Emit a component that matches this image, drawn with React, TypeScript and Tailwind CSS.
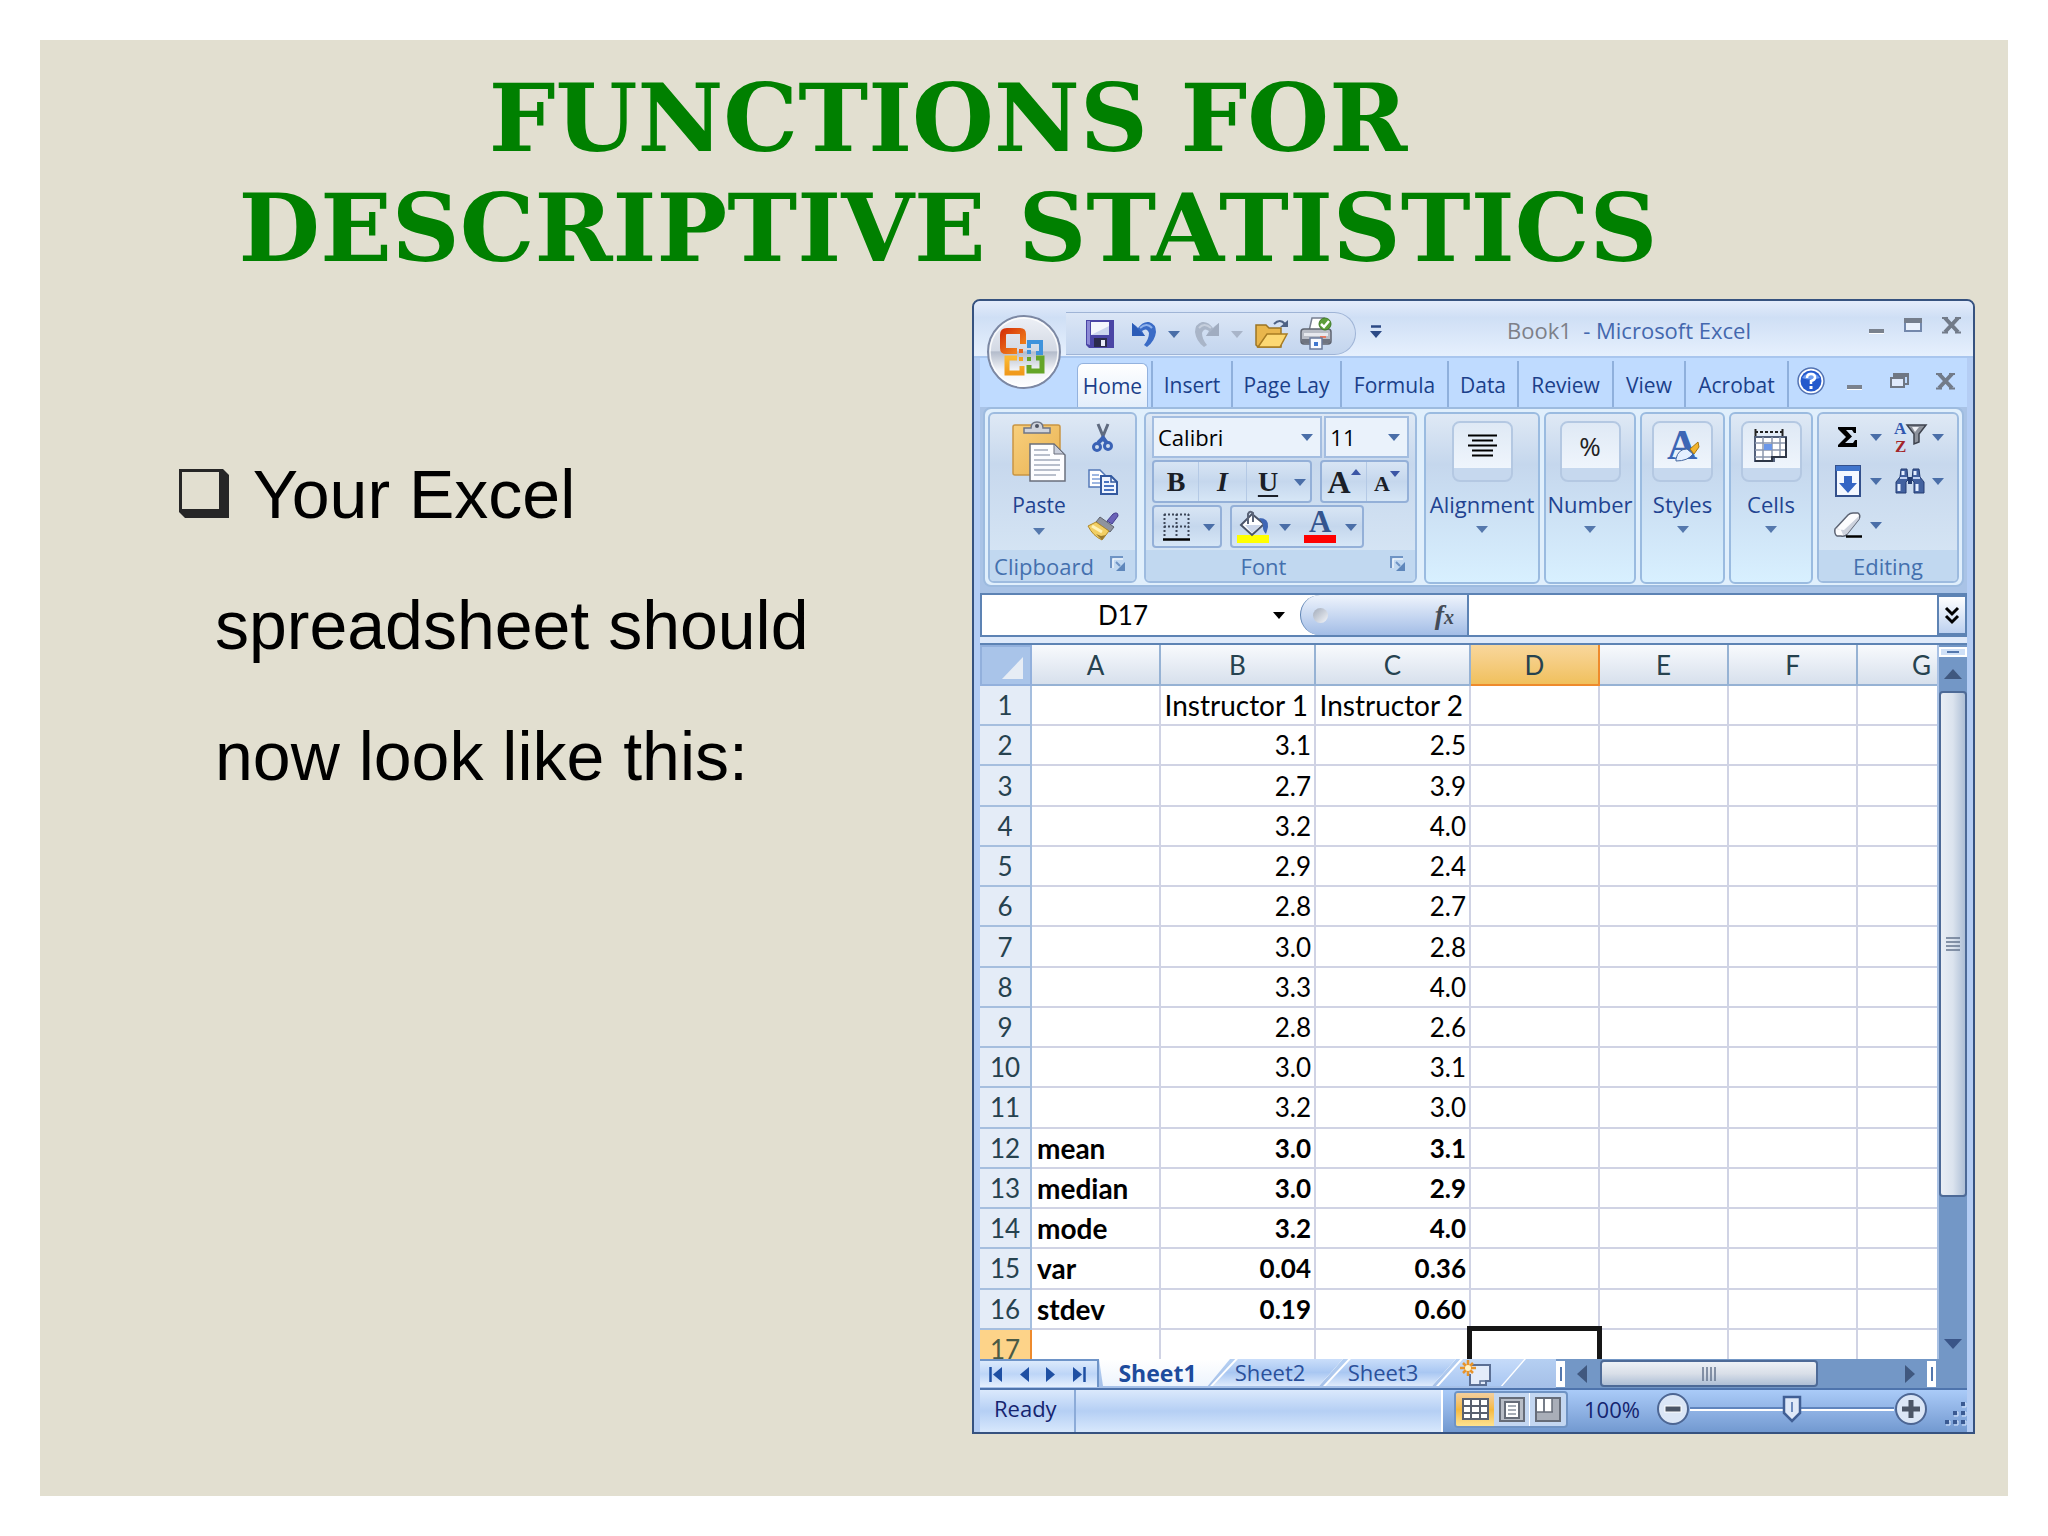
import React from "react";

const ui = "font-['Open_Sans','Noto_Sans',sans-serif]";
const cellFont = "font-['Lato','Liberation_Sans',sans-serif]";

type IconProps = { w: number; h: number; className?: string; children: React.ReactNode };
function Icon({ w, h, className = "", children }: IconProps) {
  return (
    <svg width={w} height={h} viewBox={`0 0 ${w} ${h}`} className={`block shrink-0 overflow-visible ${className}`} aria-hidden="true" fill="none">
      {children}
    </svg>
  );
}

function Caret({ className = "text-[#4a6ea8]" }: { className?: string }) {
  return (
    <Icon w={12} h={8} className={className}>
      <path d="M0 1H12L6 8Z" fill="currentColor" />
    </Icon>
  );
}

function BulletIcon() {
  return (
    <svg width="50" height="49" viewBox="0 0 50 49" className="mr-1.5 inline-block align-baseline" aria-hidden="true">
      <path d="M0 0H44L50 6V49H6L0 43Z" fill="#262626" />
      <path d="M3 3H40V40H3Z" fill="#e2dfd0" />
    </svg>
  );
}

function OfficeLogo() {
  return (
    <Icon w={76} h={76}>
      <defs>
        <linearGradient id="orb" x1="0" y1="0" x2="0" y2="1">
          <stop offset="0" stopColor="#eef1f7" />
          <stop offset="0.48" stopColor="#d3d9e4" />
          <stop offset="0.5" stopColor="#b4bccb" />
          <stop offset="0.75" stopColor="#f1f3f7" />
          <stop offset="1" stopColor="#ffffff" />
        </linearGradient>
        <linearGradient id="orbRed" x1="0" y1="0" x2="1" y2="1">
          <stop offset="0" stopColor="#d6350a" />
          <stop offset="1" stopColor="#f58a1d" />
        </linearGradient>
        <linearGradient id="orbYellow" x1="0" y1="0" x2="0" y2="1">
          <stop offset="0" stopColor="#fcb931" />
          <stop offset="1" stopColor="#f09a1c" />
        </linearGradient>
      </defs>
      <circle cx="38" cy="38" r="36" fill="url(#orb)" stroke="#7c88a3" strokeWidth="2" />
      <circle cx="38" cy="38" r="34" stroke="#fff" strokeWidth="1.5" opacity="0.8" />
      <path d="M37 30V20Q37 17 34 17H21Q17 17 17 21V34Q17 37 20 37H31" stroke="url(#orbRed)" strokeWidth="6" />
      <path d="M43 34V28H55V39H50" stroke="#3f93dc" strokeWidth="4" />
      <path d="M31 44H21V59H36V52" stroke="url(#orbYellow)" strokeWidth="5" />
      <path d="M50 44H56V57H43V51" stroke="#64a527" strokeWidth="5" />
      <rect x="33" y="35" width="4" height="4" fill="#e8641c" />
      <rect x="41" y="36" width="4" height="4" fill="#3f93dc" />
      <rect x="33" y="43" width="4" height="4" fill="#f2a41f" />
      <rect x="41" y="43" width="4" height="4" fill="#64a527" />
    </Icon>
  );
}

const SaveIcon = () => (
  <Icon w={28} h={28}>
    <path d="M0 0H28V28H3L0 25Z" fill="#4a45a5" />
    <path d="M1 1H4V25L1 24Z" fill="#8d8ad6" />
    <rect x="5" y="2" width="18" height="13" fill="#f4f6fd" />
    <path d="M5 15L23 6V15Z" fill="#ccd5ef" />
    <rect x="8" y="18" width="13" height="9" fill="#2b2b4c" />
    <rect x="15" y="20" width="4" height="6" fill="#e8ebf8" />
  </Icon>
);

const UndoIcon = ({ light = false }: { light?: boolean }) => (
  <Icon w={26} h={26} className={light ? "-scale-x-100" : ""}>
    <path d="M7 7Q12 0 18 1Q25 3 25 11Q24 20 16 26L13 24Q18 18 18 12Q16 6 11 10L14 15H1V2L5 5Z" fill={light ? "#a9b5c8" : "#3a6bc6"} />
    <path d="M1 2V15H14L11 12L5 6Z" fill={light ? "#a0acc0" : "#2b5cb8"} />
    <path d="M9 7Q16 1 21 7" stroke={light ? "#c6cfdd" : "#8fb2ec"} strokeWidth="2" />
  </Icon>
);

const OpenIcon = () => (
  <Icon w={34} h={30}>
    <path d="M1 6H11L14 9H26V28H3L1 26Z" fill="#e9b64c" stroke="#9b7425" strokeWidth="1.5" />
    <path d="M3 28L12 15H32L25 28Z" fill="#fcd873" stroke="#a87c22" strokeWidth="1.5" />
    <path d="M19 5Q25 -1 30 5" stroke="#4e6284" strokeWidth="2" />
    <path d="M25 8H33V1Z" fill="#4e6284" />
  </Icon>
);

const PrintIcon = () => (
  <Icon w={34} h={33}>
    <path d="M10 14L13 1H25L22 14Z" fill="#fff" stroke="#777f90" strokeWidth="1.5" />
    <rect x="2" y="12" width="30" height="15" rx="3" fill="#b9bdc6" stroke="#5f6470" strokeWidth="1.5" />
    <rect x="5" y="16" width="24" height="3" fill="#e7e9ee" />
    <rect x="21" y="19" width="6" height="2" fill="#e77a62" />
    <rect x="3" y="22" width="28" height="4" fill="#6f7480" />
    <rect x="11" y="21" width="12" height="11" fill="#f7faff" stroke="#69799a" strokeWidth="1.5" />
    <rect x="15" y="25" width="4" height="4" fill="#3f77cf" />
    <circle cx="26" cy="7" r="6" fill="#5d9e3a" stroke="#3f7a25" />
    <path d="M22 7L25 10L30 4" stroke="#fff" strokeWidth="2.5" />
  </Icon>
);

const PasteIcon = () => (
  <Icon w={54} h={62}>
    <defs>
      <linearGradient id="clip" x1="0" y1="0" x2="1" y2="1">
        <stop offset="0" stopColor="#f8cf7c" />
        <stop offset="1" stopColor="#e9b354" />
      </linearGradient>
    </defs>
    <rect x="1" y="4" width="47" height="50" rx="2" fill="url(#clip)" stroke="#c99543" strokeWidth="1.5" />
    <path d="M12 12V7H19Q19 1 25 1Q31 1 31 7H38V12Z" fill="#cfd3dc" stroke="#6f7686" strokeWidth="1.5" />
    <circle cx="25" cy="5" r="2" fill="#4e5462" />
    <path d="M18 23H42L53 34V60H18Z" fill="#fdfdff" stroke="#6a6f7c" strokeWidth="1.5" />
    <path d="M42 23V33H52Z" fill="#c9cedb" stroke="#6a6f7c" />
    <path d="M22 29H36M22 34H38M22 39H48M22 44H48M22 49H48M22 54H44" stroke="#b9bfcc" strokeWidth="2" />
  </Icon>
);

const CutIcon = () => (
  <Icon w={22} h={30}>
    <path d="M6 1L13 18M16 1L9 18" stroke="#5f6b80" strokeWidth="3" />
    <circle cx="5" cy="24" r="3.5" stroke="#3a62b5" strokeWidth="3" />
    <circle cx="16" cy="23" r="3.5" stroke="#3a62b5" strokeWidth="3" />
    <path d="M6 20L11 15L15 20" stroke="#3a62b5" strokeWidth="4" />
  </Icon>
);

const CopyIcon = () => (
  <Icon w={30} h={26}>
    <path d="M1 1H12L17 6V18H1Z" fill="#fff" stroke="#5378b8" strokeWidth="1.5" />
    <path d="M4 6H11M4 10H13M4 14H13" stroke="#7fa0d8" strokeWidth="1.5" />
    <path d="M13 7H23L29 13V25H13Z" fill="#eef4ff" stroke="#33599f" strokeWidth="2" />
    <path d="M23 7V13H29" stroke="#33599f" strokeWidth="1.5" />
    <path d="M16 13H21M16 17H26M16 21H26" stroke="#4a74c0" strokeWidth="2" />
  </Icon>
);

const BrushIcon = () => (
  <Icon w={32} h={29}>
    <path d="M20 9L26 2Q31 -1 31 4L25 12Z" fill="#6a62b8" stroke="#433c8c" />
    <path d="M13 5L27 15L23 20L9 10Z" fill="#8f939d" stroke="#5e626c" />
    <path d="M9 10L22 19L15 28Q6 24 1 14Z" fill="#f2cf64" stroke="#b08a2b" />
    <path d="M5 14L15 20" stroke="#fff3b8" strokeWidth="3" />
    <path d="M9 22L15 28L19 23L14 24Z" fill="#9a7a2c" />
  </Icon>
);

const LauncherIcon = () => (
  <Icon w={16} h={16}>
    <path d="M1 12V1H13" stroke="#6f94c4" strokeWidth="2" />
    <path d="M6 6L10 10" stroke="#6f94c4" strokeWidth="2" />
    <path d="M15 6V15H6Z" fill="#5f87bb" />
    <path d="M3 12V3H13" stroke="#fff" strokeWidth="1" />
  </Icon>
);

const BordersIcon = () => (
  <Icon w={27} h={28}>
    <path d="M1 1.5H26M1 13.5H26M1.5 1V24M13.5 1V24M25.5 1V24" stroke="#3c4658" strokeWidth="2" strokeDasharray="2 2" />
    <path d="M0 26.5H27" stroke="#000" strokeWidth="2.5" />
  </Icon>
);

const FillIcon = () => (
  <Icon w={34} h={34}>
    <rect x="1" y="25" width="32" height="8" fill="#ffff00" />
    <path d="M16 4L28 14L16 25L5 15Z" fill="#fff" stroke="#4a5468" strokeWidth="2" />
    <path d="M9 15H25L16 23Z" fill="#cbd6ea" />
    <path d="M12 14V4Q14 0 17 3V12" stroke="#5a6478" strokeWidth="2" />
    <path d="M23 8Q33 8 32 17Q31 21 30 24Q26 20 27 14Z" fill="#3f66b5" />
  </Icon>
);

const AlignIcon = () => (
  <Icon w={29} h={23}>
    <path d="M0 1.5H29M4 6.5H25M0 11.5H29M4 16.5H25M4 21.5H25" stroke="#000" strokeWidth="2" />
  </Icon>
);

const StylesIcon = () => (
  <Icon w={34} h={33}>
    <text x="1" y="30" fontFamily="Liberation Serif" fontWeight="700" fontSize="42" fill="#3c66b5">A</text>
    <path d="M10 30Q12 20 21 20L27 25Q22 32 10 32Z" fill="#e4efff" stroke="#44679f" />
    <path d="M24 20L32 13L33 18L28 25Z" fill="#f2b42d" stroke="#a77912" />
  </Icon>
);

const CellsIcon = () => (
  <Icon w={34} h={33}>
    <path d="M1 8H32V28H20V32H1Z" fill="#fff" stroke="#53617c" strokeWidth="2" />
    <path d="M1 14H32M1 21H32M1 28H20M9 8V32M18 8V28M26 8V28" stroke="#8b97ad" strokeWidth="1.5" />
    <rect x="10" y="15" width="8" height="6" fill="#6b97e8" />
    <path d="M1 3H29" stroke="#222" strokeWidth="2" strokeDasharray="3 2" />
    <path d="M1.5 0V7M28.5 0V7" stroke="#222" strokeWidth="2" />
    <path d="M1 32H18V28H32V8" stroke="#2e3747" strokeWidth="2" />
  </Icon>
);

const SigmaIcon = () => (
  <Icon w={20} h={20}>
    <path d="M0 0H18V6H16L14 3H8L14 9.5L7 16H15L17 13H19V20H0V18L8 10L0 2Z" fill="#000" />
  </Icon>
);

const SortIcon = () => (
  <Icon w={33} h={32}>
    <text x="0" y="13" fontFamily="Liberation Serif" fontWeight="700" fontSize="17" fill="#2f57b0">A</text>
    <text x="1" y="31" fontFamily="Liberation Serif" fontWeight="700" fontSize="17" fill="#a3262a">Z</text>
    <path d="M13 4H32L25 13V21L20 23V13Z" fill="#8d929c" stroke="#3d424d" strokeWidth="1.5" />
    <path d="M18 6H25L21 11Z" fill="#eef0f5" />
  </Icon>
);

const FillDownIcon = () => (
  <Icon w={26} h={32}>
    <rect x="1" y="1" width="24" height="30" fill="#f4f8ff" stroke="#33508c" strokeWidth="2" />
    <rect x="1" y="1" width="24" height="5" fill="#3f74cc" />
    <path d="M9 11H17V18H22L13 28L4 18H9Z" fill="#3465c4" />
  </Icon>
);

const FindIcon = () => (
  <Icon w={30} h={26}>
    <path d="M6 1H12L13 12L11 14V25H1V14L5 9Z" fill="#42619f" stroke="#243d72" />
    <path d="M18 1H24L25 9L29 14V25H19V14L17 12Z" fill="#42619f" stroke="#243d72" />
    <rect x="13" y="9" width="4" height="7" fill="#243d72" />
    <path d="M4 16V23M22 16V23M8 3V7M20 3V7" stroke="#e5efff" strokeWidth="3" />
    <path d="M5 10H12M18 10H25" stroke="#c1d2f1" strokeWidth="2" />
  </Icon>
);

const EraserIcon = () => (
  <Icon w={28} h={25}>
    <path d="M1 16L14 2Q16 0 19 0H24Q27 2 25 6L13 21Q11 24 7 23H3Q0 21 1 16Z" fill="#fcfcfe" stroke="#5c6373" strokeWidth="1.5" />
    <path d="M1 16Q7 14 9 22L13 21L25 6V3L10 17" fill="#cdd2dd" />
    <path d="M12 23.5H28" stroke="#000" strokeWidth="2.5" />
  </Icon>
);

const HelpIcon = () => (
  <Icon w={28} h={28}>
    <circle cx="14" cy="14" r="13" fill="#fff" stroke="#5474b4" strokeWidth="1.5" />
    <circle cx="14" cy="14" r="10.5" fill="#2459cc" />
    <path d="M5 11Q14 0 23 11Q14 14 5 11Z" fill="#6f9df0" />
    <path d="M10 11Q10 7 14 7Q18 7 18 10.5Q18 13 14 14V17" stroke="#fff" strokeWidth="2.5" />
    <rect x="12.5" y="19" width="3" height="3" fill="#fff" />
  </Icon>
);

const MinimizeIcon = () => (
  <Icon w={15} h={17}>
    <rect x="0" y="12" width="15" height="4" fill="#7a828e" />
    <rect x="0" y="16" width="15" height="1" fill="#fff" />
  </Icon>
);
const MaximizeIcon = () => (
  <Icon w={18} h={17}>
    <rect x="1" y="2" width="16" height="12" stroke="#7388ac" strokeWidth="2" fill="#eaf1fc" />
    <rect x="0" y="1" width="18" height="5" fill="#757e8c" />
  </Icon>
);
const RestoreIcon = () => (
  <Icon w={19} h={17}>
    <path d="M4 5V1H18V11H14" stroke="#6f7784" strokeWidth="2" />
    <rect x="4" y="0" width="15" height="4" fill="#6f7784" />
    <rect x="1" y="5" width="13" height="9" fill="#dfeafc" stroke="#6f7784" strokeWidth="2" />
  </Icon>
);
const CloseIcon = () => (
  <Icon w={19} h={17}>
    <path d="M3 1L16 15M16 1L3 15" stroke="#727b89" strokeWidth="4" />
    <path d="M0 1H6M13 1H19M0 15.5H6M13 15.5H19" stroke="#727b89" strokeWidth="2" />
  </Icon>
);

function IconButton({ label, className = "", children }: { label: string; className?: string; children: React.ReactNode }) {
  return (
    <button type="button" aria-label={label} className={`flex shrink-0 items-center justify-center ${className}`}>
      {children}
    </button>
  );
}

function TitleBar() {
  return (
    <header className="relative flex h-[57px] items-start border-b-2 border-[#a9c6ee] bg-linear-to-b from-[#e4ecfb] via-[#cfdff5] via-30% to-[#e6f0fd] pr-[12px]">
      <div className="absolute top-[13px] left-[12px] z-10">
        <IconButton label="Office Button"><OfficeLogo /></IconButton>
      </div>
      <div className="mt-[11px] ml-[92px] flex h-[43px] w-[290px] items-center rounded-r-full border border-l-0 border-[#9fb4d6] bg-linear-to-b from-[#dbe6f6] to-[#c3d5ee] pl-[20px]">
        <IconButton label="Save"><SaveIcon /></IconButton>
        <IconButton label="Undo" className="ml-[17px]"><UndoIcon /></IconButton>
        <IconButton label="Undo history" className="ml-[11px]"><Caret /></IconButton>
        <IconButton label="Redo" className="ml-[14px]"><UndoIcon light /></IconButton>
        <IconButton label="Redo history" className="ml-[11px]"><Caret className="text-[#a9b5c9]" /></IconButton>
        <IconButton label="Open" className="ml-[12px]"><OpenIcon /></IconButton>
        <IconButton label="Quick Print" className="ml-[10px]"><PrintIcon /></IconButton>
      </div>
      <IconButton label="Customize Quick Access Toolbar" className="mt-[24px] ml-[14px]">
        <Icon w={12} h={13}>
          <path d="M1 1.5H11" stroke="#2c4a86" strokeWidth="2.5" />
          <path d="M0 6H12L6 13Z" fill="#2c4a86" />
        </Icon>
      </IconButton>
      <div className="mt-[13px] flex flex-1 justify-end pr-[118px] text-[22px] leading-[32px] whitespace-pre text-[#4468ae]">
        <span className="text-[#7d7f88]">Book1</span>
        <span>{"  - Microsoft Excel"}</span>
      </div>
      <div className="mt-[16px] flex items-center gap-[20px]">
        <IconButton label="Minimize"><MinimizeIcon /></IconButton>
        <IconButton label="Maximize"><MaximizeIcon /></IconButton>
        <IconButton label="Close"><CloseIcon /></IconButton>
      </div>
    </header>
  );
}

const tabs = [
  { name: "Insert", cls: "w-[80px]" },
  { name: "Page Lay", cls: "w-[109px]" },
  { name: "Formula", cls: "w-[107px]" },
  { name: "Data", cls: "w-[70px]" },
  { name: "Review", cls: "w-[95px]" },
  { name: "View", cls: "w-[72px]" },
  { name: "Acrobat", cls: "w-[103px]" },
];

function TabRow() {
  return (
    <nav aria-label="Ribbon tabs" className="flex h-[49px] items-end bg-[#bfdbff] pr-3 pl-[97px] text-[21px] text-[#1b3f8a]">
      <button type="button" className="h-[44px] w-[71px] rounded-t-md border border-b-0 border-[#93b2de] bg-linear-to-b from-white to-[#e3eefb] pt-[2px] text-center whitespace-nowrap">Home</button>
      <div className="ml-[3px] flex h-[46px] border-l-2 border-[#8fb0dc]">
        {tabs.map((t) => (
          <button type="button" key={t.name} className={`${t.cls} border-r-2 border-[#8fb0dc] pt-[4px] text-center whitespace-nowrap`}>
            {t.name}
          </button>
        ))}
      </div>
      <div className="mb-[12px] ml-auto flex items-center">
        <IconButton label="Help"><HelpIcon /></IconButton>
        <IconButton label="Minimize workbook" className="ml-[22px]"><MinimizeIcon /></IconButton>
        <IconButton label="Restore workbook" className="ml-[28px]"><RestoreIcon /></IconButton>
        <IconButton label="Close workbook" className="ml-[27px]"><CloseIcon /></IconButton>
      </div>
    </nav>
  );
}

const groupBox = "flex h-[171px] flex-col overflow-hidden rounded-md border-2 border-[#9dbbdf]";
const groupBg = "bg-linear-to-b from-[#dfe9f5] via-[#c7d8ed] via-30% to-[#d9e8f6]";
const innerBox = "flex h-[43px] items-center rounded border-2 border-[#94b0d8] bg-linear-to-b from-[#d8e5f4] via-[#c5d7ed] to-[#d6e6f6]";

function GroupLabel({ name, launcher = false, cls = "" }: { name: string; launcher?: boolean; cls?: string }) {
  return (
    <div className="relative flex h-[31px] shrink-0 items-center justify-center bg-[#c1d8f0] text-[22px] leading-[28px] text-[#4470ae]">
      <span className={cls}>{name}</span>
      {launcher && (
        <span className="absolute top-[6px] right-[9px]">
          <IconButton label={`${name} options`}><LauncherIcon /></IconButton>
        </span>
      )}
    </div>
  );
}

function Combo({ label, value, cls }: { label: string; value: string; cls: string }) {
  return (
    <label className={`relative flex h-[42px] items-center border-2 border-[#a3bde0] bg-[#eaf2fb] ${cls}`}>
      <select aria-label={label} defaultValue={value} className="h-full w-full appearance-none pl-1 text-[22px] text-black">
        <option>{value}</option>
      </select>
      <span className="pointer-events-none absolute right-[7px]"><Caret /></span>
    </label>
  );
}

function CollapsedGroup({ name, cls, children }: { name: string; cls: string; children: React.ReactNode }) {
  return (
    <button type="button" className={`flex h-[172px] shrink-0 flex-col items-center rounded-md border-2 border-[#9abbe0] bg-linear-to-b from-[#dfe9f5] via-[#c5d7ed] via-30% to-[#d8f0ff] pt-[7px] ${cls}`}>
      <span className="flex h-[61px] w-[61px] shrink-0 flex-col overflow-hidden rounded-lg border-2 border-[#b4c8e2] bg-[#c6d8ee]">
        <span className="flex h-[45px] items-center justify-center bg-linear-to-b from-[#dfe9f5] to-[#eff5fc]">{children}</span>
      </span>
      <span className="mt-[7px] text-[22px] leading-[30px] text-[#1f4391]">{name}</span>
      <Caret className="mt-[6px] text-[#5578ad]" />
    </button>
  );
}

function Ribbon() {
  const serifButton = "flex h-full items-center justify-center font-['Liberation_Serif',serif] font-bold text-[#1b1f28]";
  return (
    <div className="mx-[3px] flex h-[180px] items-start overflow-hidden rounded-lg border-2 border-[#9dbbdf] bg-[#e0effc] pt-[3px] pl-[3px]">
      <section className={`${groupBox} ${groupBg} w-[149px] shrink-0`}>
        <div className="flex flex-1">
          <button type="button" className="ml-[22px] flex w-[54px] flex-col items-center pt-[7px]">
            <PasteIcon />
            <span className="mt-[7px] text-[21px] leading-[30px] text-[#1f4391]">Paste</span>
            <Caret className="mt-[7px] text-[#5578ad]" />
          </button>
          <div className="ml-[21px] flex flex-col items-center pt-[8px]">
            <IconButton label="Cut" className="h-[32px]"><CutIcon /></IconButton>
            <IconButton label="Copy" className="mt-[12px] h-[32px]"><CopyIcon /></IconButton>
            <IconButton label="Format Painter" className="mt-[12px] h-[32px]"><BrushIcon /></IconButton>
          </div>
        </div>
        <GroupLabel name="Clipboard" launcher cls="mr-[37px]" />
      </section>

      <section className={`${groupBox} ${groupBg} ml-[7px] w-[273px] shrink-0`}>
        <div className="flex flex-1 flex-col gap-[2px] px-[6px] pt-[2px]">
          <div className="flex gap-[2px]">
            <Combo label="Font" value="Calibri" cls="w-[171px]" />
            <Combo label="Font size" value="11" cls="w-[85px]" />
          </div>
          <div className="flex gap-[8px]">
            <div className={`${innerBox} w-[160px]`}>
              <button type="button" aria-label="Bold" className={`${serifButton} w-[45px] border-r border-[#b4c9e5] text-[28px]`}>B</button>
              <button type="button" aria-label="Italic" className={`${serifButton} w-[48px] border-r border-[#b4c9e5] text-[28px] italic`}>I</button>
              <button type="button" aria-label="Underline" className={`${serifButton} w-[42px] text-[28px] underline underline-offset-4`}>U</button>
              <IconButton label="Underline style" className="ml-[5px]"><Caret /></IconButton>
            </div>
            <div className={`${innerBox} w-[89px]`}>
              <button type="button" aria-label="Grow font" className={`${serifButton} w-[45px] border-r border-[#b4c9e5] text-[32px]`}>
                A<Icon w={10} h={6} className="mb-5"><path d="M0 6H10L5 0Z" fill="#3b55a5" /></Icon>
              </button>
              <button type="button" aria-label="Shrink font" className={`${serifButton} w-[40px] pt-1 text-[22px]`}>
                A<Icon w={10} h={6} className="mb-5"><path d="M0 0H10L5 6Z" fill="#3b55a5" /></Icon>
              </button>
            </div>
          </div>
          <div className="flex gap-[8px]">
            <div className={`${innerBox} w-[70px] pl-[9px]`}>
              <IconButton label="Borders"><BordersIcon /></IconButton>
              <IconButton label="Border style" className="ml-[13px]"><Caret /></IconButton>
            </div>
            <div className={`${innerBox} w-[134px] pl-[4px]`}>
              <IconButton label="Fill color"><FillIcon /></IconButton>
              <IconButton label="Fill color list" className="ml-[9px]"><Caret /></IconButton>
              <IconButton label="Font color" className="ml-[12px]">
                <Icon w={34} h={34}>
                  <rect x="1" y="25" width="32" height="8" fill="#fe0000" />
                  <text x="6" y="22" fontFamily="Liberation Serif" fontWeight="700" fontSize="31" fill="#34558f">A</text>
                </Icon>
              </IconButton>
              <IconButton label="Font color list" className="ml-[8px]"><Caret /></IconButton>
            </div>
          </div>
        </div>
        <GroupLabel name="Font" launcher cls="mr-[34px]" />
      </section>

      <CollapsedGroup name="Alignment" cls="ml-[7px] w-[116px]"><AlignIcon /></CollapsedGroup>
      <CollapsedGroup name="Number" cls="ml-[4px] w-[92px]"><span className="text-[26px] leading-none text-[#222]">%</span></CollapsedGroup>
      <CollapsedGroup name="Styles" cls="ml-[4px] w-[85px]"><StylesIcon /></CollapsedGroup>
      <CollapsedGroup name="Cells" cls="ml-[4px] w-[84px]"><CellsIcon /></CollapsedGroup>

      <section className={`${groupBox} ${groupBg} mr-[3px] ml-[4px] flex-1`}>
        <div className="grid flex-1 grid-cols-[26px_12px_30px_12px] content-start items-center gap-x-[9px] pt-[6px] pl-[16px]">
          <IconButton label="AutoSum" className="h-[34px]"><SigmaIcon /></IconButton>
          <IconButton label="AutoSum list"><Caret /></IconButton>
          <IconButton label="Sort and Filter" className="ml-[8px] h-[34px]"><SortIcon /></IconButton>
          <IconButton label="Sort list" className="ml-[4px]"><Caret /></IconButton>
          <IconButton label="Fill" className="h-[54px]"><FillDownIcon /></IconButton>
          <IconButton label="Fill list"><Caret /></IconButton>
          <IconButton label="Find and Select" className="ml-[8px]"><FindIcon /></IconButton>
          <IconButton label="Find list" className="ml-[4px]"><Caret /></IconButton>
          <IconButton label="Clear" className="h-[34px]"><EraserIcon /></IconButton>
          <IconButton label="Clear list"><Caret /></IconButton>
        </div>
        <GroupLabel name="Editing" />
      </section>
    </div>
  );
}

function FormulaBar() {
  return (
    <div className="mt-[6px] border-y-2 border-[#5d83b4] bg-[#dfeafa]">
      <div className="flex h-[42px] border-b-2 border-l-2 border-[#5d83b4] bg-white">
        <input aria-label="Name Box" defaultValue="D17" className={`${cellFont} w-[282px] shrink-0 text-center text-[26px] text-black`} />
        <IconButton label="Named ranges" className="w-[30px]"><Caret className="text-black" /></IconButton>
        <div className="ml-[6px] flex w-[169px] shrink-0 items-center justify-between rounded-l-full border-r-2 border-l border-[#5d83b4] bg-linear-to-b from-[#eff4fc] to-[#a3bde6] pr-[13px] pl-[12px]">
          <span className="h-[15px] w-[15px] rounded-full bg-linear-to-br from-[#a2abba] to-[#f5f7fb]" />
          <button type="button" aria-label="Insert Function" className="font-['Liberation_Serif',serif] text-[28px] leading-none font-bold text-[#444b57] italic">
            f<span className="text-[20px]">x</span>
          </button>
        </div>
        <input aria-label="Formula" className="min-w-0 flex-1" />
        <IconButton label="Expand formula bar" className="w-[30px] border-2 border-[#5d83b4] bg-linear-to-b from-white to-[#bdd1ef]">
          <Icon w={14} h={17}>
            <path d="M1 1L7 7L13 1M1 9L7 15L13 9" stroke="#000" strokeWidth="3" />
          </Icon>
        </IconButton>
      </div>
      <div className="h-[6px]" />
    </div>
  );
}

const columns = [
  { name: "A", cls: "w-[129px]" },
  { name: "B", cls: "w-[155px]" },
  { name: "C", cls: "w-[155px]" },
  { name: "D", cls: "w-[129px]" },
  { name: "E", cls: "w-[129px]" },
  { name: "F", cls: "w-[129px]" },
  { name: "G", cls: "w-[129px]" },
];

const rows: [string, string, string][] = [
  ["", "Instructor 1", "Instructor 2"],
  ["", "3.1", "2.5"],
  ["", "2.7", "3.9"],
  ["", "3.2", "4.0"],
  ["", "2.9", "2.4"],
  ["", "2.8", "2.7"],
  ["", "3.0", "2.8"],
  ["", "3.3", "4.0"],
  ["", "2.8", "2.6"],
  ["", "3.0", "3.1"],
  ["", "3.2", "3.0"],
  ["mean", "3.0", "3.1"],
  ["median", "3.0", "2.9"],
  ["mode", "3.2", "4.0"],
  ["var", "0.04", "0.36"],
  ["stdev", "0.19", "0.60"],
  ["", "", ""],
];

function Grid() {
  const line = "border-r-2 border-b-2 border-[#d0d3e4]";
  return (
    <div className="h-[714px] min-w-0 flex-1 overflow-hidden bg-white">
      <table className={`${cellFont} h-[725px] w-[1007px] table-fixed border-separate border-spacing-0 text-[26px] leading-[30px] text-black`}>
        <thead>
          <tr className="h-[41px]">
            <th aria-label="Select all" className="w-[52px] border-2 border-[#92b0dc] bg-[#a9c4e9]">
              <Icon w={22} h={22} className="mt-1 ml-5">
                <path d="M21 0V22H0Z" fill="#e7edf5" />
              </Icon>
            </th>
            {columns.map((c) => (
              <th
                key={c.name}
                scope="col"
                className={`${c.cls} border-r-2 border-b-2 font-normal text-[#26424f] ${
                  c.name === "D" ? "border-[#ee8a2c] bg-linear-to-b from-[#f9d79c] to-[#f0c05c]" : "border-[#96b2d4] bg-linear-to-b from-[#f8fafd] to-[#d7e0ec]"
                }`}
              >
                {c.name}
              </th>
            ))}
          </tr>
        </thead>
        <tbody>
          {rows.map(([a, b, c], i) => {
            const bold = i > 10 ? "font-bold" : "";
            const active = i === 16;
            const value = i === 0 ? "pr-[6px] text-[28px]" : "pr-[3px]";
            return (
              <tr key={i}>
                <th scope="row" className={`border-r-2 border-b-2 font-normal ${active ? "border-[#ee8a2c] bg-[#fdd389] text-[#4a5a45]" : "border-[#a5bede] bg-[#e4ecf7] text-[#26424f]"}`}>
                  {i + 1}
                </th>
                <td className={`${line} ${bold} pl-[5px] text-[28px]`}>{a}</td>
                <td className={`${line} ${bold} ${value} text-right whitespace-nowrap`}>{b}</td>
                <td className={`${line} ${bold} ${value} text-right whitespace-nowrap`}>{c}</td>
                <td className={active ? "relative border-r-2 border-[#d0d3e4]" : line}>
                  {active && <span className="absolute -top-[4px] -right-[4px] -bottom-[4px] -left-[4px] border-[5px] border-[#161616]" />}
                </td>
                <td className={line} />
                <td className={line} />
                <td className={line} />
              </tr>
            );
          })}
        </tbody>
      </table>
    </div>
  );
}

function VerticalScroll() {
  return (
    <div className="flex w-[30px] shrink-0 flex-col items-center border-l-2 border-[#a9c1e4] bg-[#7397c6] pt-[2px]">
      <div className="flex h-[10px] w-full items-center justify-center border-2 border-white bg-[#cfe0f7]">
        <span className="h-[2px] w-[12px] bg-[#5377ad]" />
      </div>
      <IconButton label="Scroll up" className="h-[34px] w-full">
        <Icon w={18} h={10}><path d="M0 10H18L9 0Z" fill="#40587f" /></Icon>
      </IconButton>
      <div className="flex h-[506px] w-full items-center justify-center rounded-sm border-2 border-[#4d6a97] bg-linear-to-r from-[#e9eef5] via-[#dbe3ee] to-[#aebfd6]">
        <Icon w={14} h={14}>
          <path d="M0 1H14M0 5H14M0 9H14M0 13H14" stroke="#66758e" strokeWidth="1.5" />
        </Icon>
      </div>
      <IconButton label="Scroll down" className="mt-auto mb-[8px] h-[14px] w-full">
        <Icon w={18} h={10}><path d="M0 0H18L9 10Z" fill="#3a5588" /></Icon>
      </IconButton>
    </div>
  );
}

function SheetBar() {
  return (
    <div className="flex h-[29px] bg-[#7397c6] text-[22px] leading-[26px] text-[#2a509b]">
      <div className="flex w-[576px] shrink-0 bg-linear-to-b from-[#b5cff2] to-[#a5c0e8]">
        <div className="flex h-[28px] w-[119px] items-center border-t-2 border-r-2 border-[#6e94c8] bg-linear-to-b from-[#dceafc] via-[#bdd5f7] to-[#e5f0fe] pl-[9px] text-[#1e4fa3]">
          <IconButton label="First sheet"><Icon w={14} h={15}><path d="M1.5 0V15" stroke="currentColor" strokeWidth="2.5" /><path d="M13 0V15L4 7.5Z" fill="currentColor" /></Icon></IconButton>
          <IconButton label="Previous sheet" className="ml-[17px]"><Icon w={9} h={15}><path d="M9 0V15L0 7.5Z" fill="currentColor" /></Icon></IconButton>
          <IconButton label="Next sheet" className="ml-[17px]"><Icon w={9} h={15}><path d="M0 0V15L9 7.5Z" fill="currentColor" /></Icon></IconButton>
          <IconButton label="Last sheet" className="ml-[17px]"><Icon w={14} h={15}><path d="M12.5 0V15" stroke="currentColor" strokeWidth="2.5" /><path d="M1 0V15L10 7.5Z" fill="currentColor" /></Icon></IconButton>
        </div>
        <button type="button" className="h-[27px] w-[131px] bg-linear-to-b from-white to-[#edf4fd] pr-[14px] text-center text-[23px] font-bold text-[#1d4b9c] [clip-path:polygon(0_0,100%_0,83%_100%,4px_100%)]">Sheet1</button>
        {["Sheet2", "Sheet3"].map((s) => (
          <button type="button" key={s} className="-ml-[20px] h-[27px] w-[133px] bg-white [clip-path:polygon(19%_0,100%_0,82%_100%,0_100%)]">
            <span className="block h-full w-full bg-linear-to-b from-[#cadefa] via-[#a9c7f2] to-[#dfebfc] pr-[13px] text-center [clip-path:polygon(21%_0,100%_0,82%_100%,2%_100%)]">{s}</span>
          </button>
        ))}
        <button type="button" aria-label="Insert Worksheet" className="-ml-[20px] h-[27px] w-[90px] bg-white [clip-path:polygon(27%_0,100%_0,74%_100%,0_100%)]">
          <span className="flex h-full w-full items-center bg-linear-to-b from-[#c6dbf9] to-[#a9c7f2] pl-[24px] [clip-path:polygon(30%_0,98%_0,72%_100%,3%_100%)]">
            <Icon w={32} h={26}>
              <path d="M12 5H30V21H26V25H10V14" fill="#e3ecfa" stroke="#5b6f94" strokeWidth="2" />
              <path d="M26 21H20V25" stroke="#5b6f94" strokeWidth="1.5" />
              <path d="M8 0V16M0 8H16M3 3L13 13M13 3L3 13" stroke="#e8942a" strokeWidth="2.5" />
              <circle cx="8" cy="8" r="3" fill="#fff3c8" />
            </Icon>
          </span>
        </button>
      </div>
      <div className="flex flex-1 items-center">
        <div className="flex h-[26px] w-[9px] items-center justify-center bg-white"><span className="h-[14px] w-[2px] bg-[#5377ad]" /></div>
        <IconButton label="Scroll left" className="ml-[12px]"><Icon w={10} h={18}><path d="M10 0V18L0 9Z" fill="#40587f" /></Icon></IconButton>
        <div className="ml-[13px] flex h-[27px] w-[218px] items-center justify-center rounded-sm border-2 border-[#4d6a97] bg-linear-to-b from-[#edf1f6] via-[#d9dfe8] to-[#aebfd6]">
          <Icon w={14} h={14}><path d="M1 0V14M5 0V14M9 0V14M13 0V14" stroke="#66758e" strokeWidth="1.5" /></Icon>
        </div>
        <IconButton label="Scroll right" className="ml-auto"><Icon w={10} h={18}><path d="M0 0V18L10 9Z" fill="#40587f" /></Icon></IconButton>
        <div className="mr-[31px] ml-[12px] flex h-[26px] w-[9px] items-center justify-center bg-white"><span className="h-[14px] w-[2px] bg-[#5377ad]" /></div>
      </div>
    </div>
  );
}

function StatusBar() {
  return (
    <footer className="flex h-[44px] border-t-2 border-[#4e74ad] bg-linear-to-b from-[#dbe9fc] via-[#b5cff4] via-50% to-[#d8e8fc] text-[22px] leading-[37px] text-[#15246f]">
      <span className="w-[96px] border-r-2 border-[#8cabd8] pl-[14px]">Ready</span>
      <div className="flex-1" />
      <div className="flex w-[526px] shrink-0 items-center border-l-2 border-white bg-linear-to-b from-[#aacbf8] via-[#8fb2e4] to-[#7299d0] pb-[4px] pl-[11px]">
        <div className="flex h-[37px] w-[114px] overflow-hidden rounded border-2 border-[#6f93c4] bg-[#c4d7f1]">
          <IconButton label="Normal view" className="w-[38px] bg-linear-to-b from-[#f3cf9d] via-[#f5b93f] to-[#fde28f]">
            <Icon w={27} h={22}>
              <rect x="1" y="1" width="25" height="20" fill="#fff" stroke="#58606f" strokeWidth="2" />
              <path d="M1 8H26M1 15H26M9 1V21M18 1V21" stroke="#58606f" strokeWidth="2" />
            </Icon>
          </IconButton>
          <IconButton label="Page Layout view" className="w-[36px] border-r border-white">
            <Icon w={26} h={25}>
              <rect x="1" y="1" width="24" height="23" fill="#b8bdc6" stroke="#666c78" strokeWidth="2" />
              <rect x="6" y="5" width="14" height="16" fill="#fff" stroke="#666c78" strokeWidth="2" />
              <path d="M9 9H17M9 13H17M9 17H17" stroke="#8b929f" strokeWidth="1.5" />
            </Icon>
          </IconButton>
          <IconButton label="Page Break Preview" className="w-[36px]">
            <Icon w={26} h={25}>
              <rect x="1" y="1" width="24" height="23" fill="#a9aeb8" stroke="#666c78" strokeWidth="2" />
              <rect x="2" y="2" width="6" height="13" fill="#fff" />
              <rect x="10" y="2" width="7" height="13" fill="#fff" />
              <path d="M9 1V15M17 1V15M1 15H18" stroke="#666c78" strokeWidth="1.5" />
            </Icon>
          </IconButton>
        </div>
        <button type="button" className="ml-[14px] w-[60px] text-center whitespace-nowrap">100%</button>
        <IconButton label="Zoom out" className="ml-[14px]">
          <Icon w={34} h={34}>
            <circle cx="17" cy="17" r="15" fill="#dbe6f6" stroke="#4d6693" strokeWidth="2" />
            <rect x="9" y="14" width="16" height="6" fill="#4b5566" stroke="#fff" />
          </Icon>
        </IconButton>
        <div className="relative flex h-[34px] flex-1 items-center justify-center">
          <span className="absolute right-0 left-0 h-[4px] border-t-2 border-b-2 border-t-[#5f84bd] border-b-white" />
          <Icon w={20} h={28} className="relative">
            <path d="M2 2H18V18L10 26L2 18Z" fill="#dfe9f8" stroke="#405f95" strokeWidth="2.5" />
            <path d="M10 7V17" stroke="#6d8bbd" strokeWidth="2" />
          </Icon>
          <input type="range" aria-label="Zoom" min={10} max={190} defaultValue={100} className="absolute inset-0 w-full opacity-0" />
        </div>
        <IconButton label="Zoom in">
          <Icon w={34} h={34}>
            <circle cx="17" cy="17" r="15" fill="#dbe6f6" stroke="#4d6693" strokeWidth="2" />
            <path d="M17 8V26M8 17H26" stroke="#4b5566" strokeWidth="5" />
          </Icon>
        </IconButton>
        <Icon w={22} h={24} className="mt-[10px] ml-[17px]">
          <path d="M16 0H20V4H16ZM8 9H12V13H8ZM16 9H20V13H16ZM0 18H4V22H0ZM8 18H12V22H8ZM16 18H20V22H16Z" fill="#3a5a92" />
          <path d="M20 1H21V5H17M12 10H13V14H9M20 10H21V14H17M4 19H5V23H1M12 19H13V23H9M20 19H21V23H17" stroke="#d5e4fa" />
        </Icon>
      </div>
    </footer>
  );
}

function ExcelWindow() {
  return (
    <div className={`${ui} min-w-0 self-start overflow-hidden rounded-t-lg border-2 border-[#36527f] bg-[#b3cdf2]`}>
      <TitleBar />
      <div className="border-r-[6px] border-l-[6px] border-[#b4cdf4]">
        <TabRow />
        <div className="bg-[#a9c3e6]">
          <Ribbon />
          <FormulaBar />
        </div>
        <div className="flex">
          <Grid />
          <VerticalScroll />
        </div>
        <SheetBar />
        <StatusBar />
      </div>
    </div>
  );
}

export default function App() {
  return (
    <main className="flex min-h-screen bg-white p-10">
      <div className="flex flex-1 flex-col bg-[#e2dfd0] pt-[23px] pb-15">
        <h1 className="pr-[152px] text-center font-['DejaVu_Serif',serif] text-[94px] leading-[110px] font-bold text-[#008000]">
          FUNCTIONS FOR
          <br />
          DESCRIPTIVE STATISTICS
        </h1>
        <div className="mt-[16px] grid grid-cols-[932fr_1003fr] pr-[33px]">
          <ul className="pt-[130px] pr-24 pl-[175px] font-['Liberation_Sans',sans-serif] text-[68px] leading-[131px] text-black">
            <li className="-indent-9">
              <BulletIcon /> Your Excel spreadsheet should now look like this:
            </li>
          </ul>
          <ExcelWindow />
        </div>
      </div>
    </main>
  );
}
